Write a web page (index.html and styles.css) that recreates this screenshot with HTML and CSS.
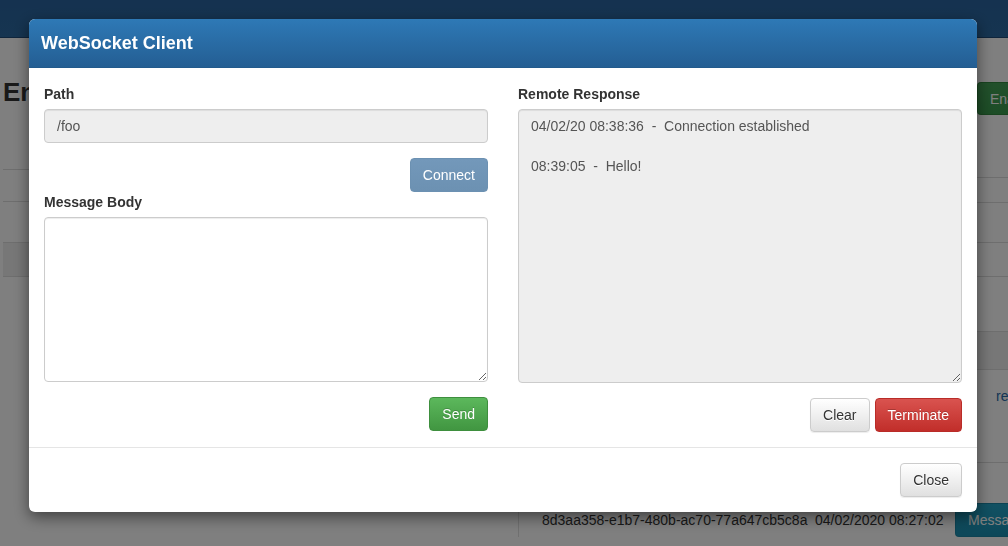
FILE: index.html
```html
<!DOCTYPE html>
<html lang="en">
<head>
<meta charset="utf-8">
<title>WebSocket Client</title>
<link rel="stylesheet" href="styles.css">
</head>
<body>
<div class="page">
  <nav class="navbar"></nav>
  <div class="main">
    <section class="col-left">
      <div class="left-head"><h1 class="page-title">En</h1></div>
      <div class="bg-row h32"></div>
      <div class="bg-row h41"></div>
      <div class="bg-row h34 band"></div>
    </section>
    <section class="col-right">
      <div class="right-head"><button class="bg-btn bg-green">Enable</button></div>
      <div class="bg-row h25"></div>
      <div class="bg-row h40"></div>
      <div class="bg-row h34"></div>
      <div class="bg-row h55"></div>
      <div class="bg-row h38 band"></div>
      <div class="bg-row h93 link-row"><a class="bg-link">remove</a></div>
      <div class="bg-row data-row">
        <span class="bg-id">8d3aa358-e1b7-480b-ac70-77a647cb5c8a</span>
        <span class="bg-date">04/02/2020 08:27:02</span>
        <button class="bg-btn bg-teal">Messages</button>
      </div>
    </section>
  </div>
</div>

<div class="backdrop"></div>

<div class="modal-wrap">
  <div class="modal">
    <div class="modal-header">WebSocket Client</div>
    <div class="modal-body">
      <div class="col">
        <label class="field-label">Path</label>
        <div class="input readonly">/foo</div>
        <div class="actions">
          <button class="btn btn-primary-disabled">Connect</button>
        </div>
        <label class="field-label">Message Body</label>
        <textarea class="area area-message"></textarea>
        <div class="actions gap-top">
          <button class="btn btn-success">Send</button>
        </div>
      </div>
      <div class="col">
        <label class="field-label">Remote Response</label>
        <textarea class="area area-response" readonly>04/02/20 08:38:36  -  Connection established

08:39:05  -  Hello!</textarea>
        <div class="actions gap-top">
          <button class="btn btn-default">Clear</button>
          <button class="btn btn-danger">Terminate</button>
        </div>
      </div>
    </div>
    <div class="modal-footer">
      <button class="btn btn-default">Close</button>
    </div>
  </div>
</div>
</body>
</html>
```

FILE: styles.css
```css
html, body {
  margin: 0;
  padding: 0;
}
body {
  width: 1008px;
  height: 546px;
  overflow: hidden;
  background: #fff;
  font-family: "Liberation Sans", Arial, sans-serif;
  font-size: 14px;
  line-height: 20px;
  color: #333;
}

/* ---------- background page ---------- */
.page {
  width: 1008px;
  height: 546px;
  overflow: hidden;
}
.navbar {
  height: 38px;
  background: linear-gradient(#2a64a0, #2c6aa2);
  border-bottom: 1px solid #1e4a78;
  box-sizing: border-box;
}
.main {
  display: grid;
  grid-template-columns: 518px 490px;
}
.col-left {
  padding-left: 3px;
}
.left-head {
  height: 132px;
  box-sizing: border-box;
  padding-top: 39px;
  border-bottom: 1px solid #dcdcdc;
}
.page-title {
  margin: 0;
  font-size: 26px;
  line-height: 30px;
  font-weight: bold;
  color: #333;
  white-space: nowrap;
}
.col-right {
  border-left: 1px solid #e0e0e0;
}
.right-head {
  height: 140px;
  box-sizing: border-box;
  padding-top: 44px;
  display: flex;
  justify-content: flex-end;
  border-bottom: 1px solid #dcdcdc;
}
.bg-btn {
  font-family: "Liberation Sans", Arial, sans-serif;
  font-size: 14px;
  line-height: 20px;
  padding: 6px 12px;
  border-radius: 4px;
  border: 1px solid transparent;
  color: #fff;
  text-align: left;
  white-space: nowrap;
  overflow: hidden;
}
.bg-green {
  width: 31px;
  height: 33px;
  padding-right: 0;
  border-top-right-radius: 0;
  border-bottom-right-radius: 0;
  background: linear-gradient(#45a157, #3a9a4d);
  border-color: #32883f;
  border-right: 0;
}
.bg-teal {
  width: 53px;
  height: 34px;
  margin-left: auto;
  padding-right: 0;
  border-right: 0;
  border-top-right-radius: 0;
  border-bottom-right-radius: 0;
  background: linear-gradient(#23a3c6, #1a8fb2);
  border-color: #1a86a6;
}
.bg-row {
  border-bottom: 1px solid #dcdcdc;
  box-sizing: border-box;
}
.h25 { height: 25px; }
.h32 { height: 32px; }
.h34 { height: 34px; }
.h38 { height: 38px; }
.h40 { height: 40px; }
.h41 { height: 41px; }
.h55 { height: 55px; }
.h93 { height: 93px; }
.band { background: #eeeeee; }
.link-row {
  display: flex;
  justify-content: flex-end;
  padding-top: 16px;
}
.bg-link {
  color: #2a6aa8;
  width: 12px;
  overflow: hidden;
  white-space: nowrap;
}
.data-row {
  border-bottom: none;
  padding: 40px 0 0 23px;
  display: flex;
  align-items: center;
  color: #333;
}
.bg-id { width: 273px; }
.bg-date { white-space: nowrap; }

/* ---------- overlay & modal ---------- */
.backdrop {
  position: fixed;
  inset: 0;
  background: rgba(0, 0, 0, 0.5);
}
.modal-wrap {
  position: fixed;
  inset: 0;
  display: flex;
  justify-content: center;
  align-items: flex-start;
  padding: 19px 2px 0 0;
}
.modal {
  width: 948px;
  background: #fff;
  border-radius: 6px;
  box-shadow: 0 5px 15px rgba(0, 0, 0, 0.5);
  overflow: hidden;
}
.modal-header {
  height: 49px;
  box-sizing: border-box;
  padding: 0 12px;
  display: flex;
  align-items: center;
  background: linear-gradient(#2e79b6, #245e93);
  color: #fff;
  font-size: 18px;
  font-weight: bold;
  border-bottom: 1px solid #225a8c;
}
.modal-body {
  padding: 16px 15px 15px;
  display: grid;
  grid-template-columns: 1fr 1fr;
  column-gap: 30px;
}
.col {
  display: flex;
  flex-direction: column;
}
.field-label {
  display: block;
  font-weight: bold;
  margin-bottom: 5px;
  color: #333;
}
.input {
  height: 34px;
  box-sizing: border-box;
  padding: 6px 12px;
  border: 1px solid #ccc;
  border-radius: 4px;
  color: #555;
  box-shadow: inset 0 1px 1px rgba(0, 0, 0, 0.075);
}
.readonly {
  background: #eee;
}
.area {
  display: block;
  box-sizing: border-box;
  width: 100%;
  margin: 0;
  padding: 6px 12px;
  border: 1px solid #ccc;
  border-radius: 4px;
  font-family: "Liberation Sans", Arial, sans-serif;
  font-size: 14px;
  line-height: 20px;
  color: #555;
  box-shadow: inset 0 1px 1px rgba(0, 0, 0, 0.075);
  resize: vertical;
  outline: none;
}
.area-message {
  height: 165px;
  background: #fff;
}
.area-response {
  height: 274px;
  background: #eee;
}
.actions {
  display: flex;
  justify-content: flex-end;
  gap: 5px;
  margin-top: 15px;
}
.btn {
  font-family: "Liberation Sans", Arial, sans-serif;
  font-size: 14px;
  line-height: 20px;
  padding: 6px 12px;
  height: 34px;
  box-sizing: border-box;
  border: 1px solid transparent;
  border-radius: 4px;
  cursor: pointer;
}
.btn-primary-disabled {
  background: linear-gradient(#7398ba, #6c91b2);
  border-color: #6c91b2;
  color: #fff;
  cursor: not-allowed;
}
.btn-success {
  background: linear-gradient(#5cb85c, #419641);
  border-color: #3e8f3e;
  color: #fff;
  text-shadow: 0 -1px 0 rgba(0, 0, 0, 0.2);
}
.btn-danger {
  background: linear-gradient(#d9534f, #c12e2a);
  border-color: #b92c28;
  color: #fff;
  text-shadow: 0 -1px 0 rgba(0, 0, 0, 0.2);
}
.btn-default {
  background: linear-gradient(#fff, #e0e0e0);
  border-color: #ccc;
  color: #333;
  text-shadow: 0 1px 0 #fff;
  box-shadow: 0 1px 1px rgba(0, 0, 0, 0.075);
}
.modal-footer {
  border-top: 1px solid #e5e5e5;
  padding: 15px;
  display: flex;
  justify-content: flex-end;
}
```
